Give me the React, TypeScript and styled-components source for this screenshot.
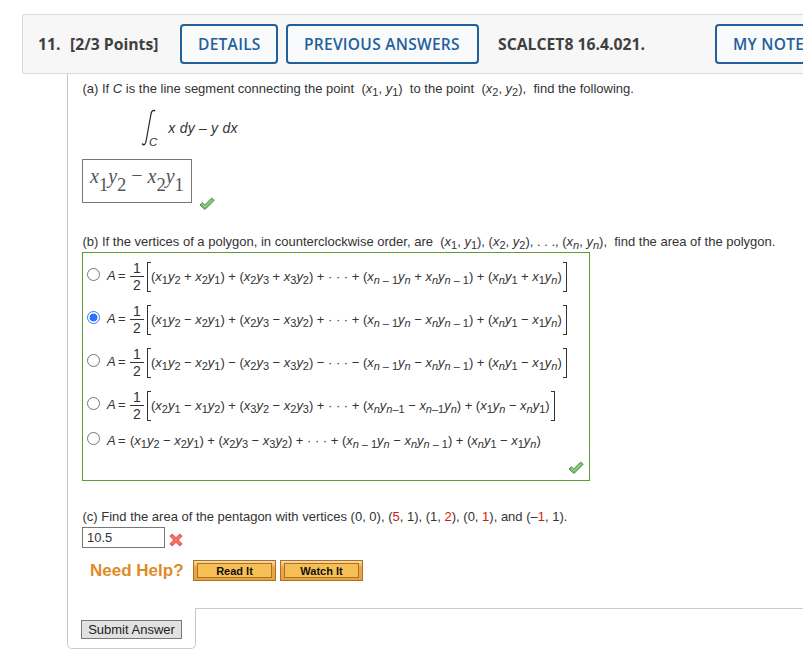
import React from "react";
import styled, { createGlobalStyle, css } from "styled-components";

const GlobalStyle = createGlobalStyle`
  * { box-sizing: border-box; }
  html, body { margin: 0; padding: 0; background: #fff; overflow: hidden; }
  body { font: 13px "Liberation Sans", Arial, sans-serif; color: #333; }
`;

const Page = styled.div`
  width: 803px;
  height: 662px;
  padding: 14px 0 0 22px;
  overflow: hidden;
`;

const Header = styled.header`
  display: flex;
  align-items: center;
  width: 900px;
  height: 60px;
  padding-left: 15px;
  background: #f7f7f7;
  border: 1px solid #d9d9d9;
  border-radius: 2px;
  font: 700 15.75px "Open Sans", sans-serif;
  color: #3f3f3f;
  white-space: nowrap;
`;

const HeaderText = styled.span<{ $w: number }>`
  flex: none;
  width: ${(p) => p.$w}px;
`;

const HeaderButton = styled.button<{ $w: number; $gap: number }>`
  flex: none;
  width: ${(p) => p.$w}px;
  height: 40px;
  margin-right: ${(p) => p.$gap}px;
  padding: 0 0 0 16px;
  background: #f9fafb;
  border: 2px solid #22609c;
  border-radius: 4px;
  color: #22609c;
  font: 600 15.5px "Open Sans", sans-serif;
  letter-spacing: 0.28px;
  text-align: left;
`;

const Body = styled.main`
  height: 534px;
  margin-left: 45px;
  padding: 7px 0 0 14px;
  border-left: 1px solid #c9c9c9;
`;

const Line = styled.div`
  height: 16px;
  padding-left: 0.5px;
  line-height: 16px;
  white-space: pre;
`;

const Sub = styled.span`
  position: relative;
  top: 3px;
  font-size: 11px;
  line-height: 0;
`;

const Red = styled.span`
  color: #d9170c;
`;

const IntegralRow = styled.div`
  display: flex;
  height: 62px;
  padding: 12px 0 0 59px;
`;

const Integrand = styled.span`
  margin: 11px 0 0 11px;
  font-size: 14px;
  font-style: italic;
  line-height: 16px;
  letter-spacing: 0.22px;
`;

const AnswerRow = styled.div`
  display: flex;
  align-items: flex-end;
  height: 51px;
  margin-bottom: 24px;
`;

const AnswerBox = styled.div`
  width: 110px;
  height: 44px;
  margin-bottom: 7px;
  padding: 6px 0 0 7px;
  border: 1px solid #777;
  color: #555;
  font: 20px/20px "Liberation Serif", serif;
  white-space: nowrap;
`;

const SerifSub = styled.span`
  position: relative;
  top: 8px;
  font-size: 18.5px;
  line-height: 0;
`;

const MarkSlot = styled.span<{ $left: number }>`
  display: block;
  height: 14px;
  margin-left: ${(p) => p.$left}px;
  transform: translateY(1px);
`;

const Choices = styled.div`
  display: flex;
  flex-direction: column;
  width: 508px;
  height: 229px;
  margin: 2px 0 28px;
  padding: 2px 5px 0 4px;
  border: 1px solid #5f9b33;
`;

const Choice = styled.label<{ $plain?: boolean }>`
  display: flex;
  align-items: flex-start;
  height: ${(p) => (p.$plain ? 31 : 43)}px;
  padding-top: ${(p) => (p.$plain ? 0 : 6)}px;
  white-space: nowrap;
`;

const Radio = styled.span<{ $on?: boolean; $plain?: boolean }>`
  flex: none;
  width: 13px;
  height: 13px;
  margin: ${(p) => (p.$plain ? 5 : 7)}px 7px 0 0;
  border: 1px solid #767676;
  border-radius: 50%;
  ${(p) =>
    p.$on &&
    css`
      border-color: #3478f6;
      background: radial-gradient(circle, #3071f7 0 3.6px, #fff 4.3px);
    `}
`;

const Lhs = styled.span<{ $plain?: boolean }>`
  flex: none;
  width: 23px;
  padding-top: ${(p) => (p.$plain ? 6 : 7)}px;
  line-height: 16px;
  word-spacing: -1.2px;
`;

const Fraction = styled.span`
  display: flex;
  flex: none;
  flex-direction: column;
  width: 14px;
  margin-right: 3px;
  text-align: center;
  font-size: 14px;
  line-height: 14px;
`;

const FractionTop = styled.span`
  height: 16px;
  border-bottom: 1px solid #333;
`;

const FractionBottom = styled.span`
  padding-top: 1px;
`;

const Bracket = styled.span<{ $side: "left" | "right" }>`
  flex: none;
  width: 4px;
  height: 30px;
  margin-top: 1px;
  border: 1px solid #333;
  border-${(p) => (p.$side === "left" ? "right" : "left")}: 0;
`;

const Formula = styled.span<{ $w: number; $plain?: boolean }>`
  flex: none;
  width: ${(p) => p.$w}px;
  padding-top: ${(p) => (p.$plain ? 6 : 8)}px;
  line-height: 16px;
  letter-spacing: -0.02px;
`;

const ChoicesMark = styled.span`
  display: flex;
  justify-content: flex-end;
  margin-top: 3px;
`;

const InputRow = styled.div`
  display: flex;
  align-items: center;
  gap: 4px;
  height: 21px;
  margin-top: 2px;
`;

const NumberInput = styled.input`
  width: 83px;
  height: 21px;
  padding: 0 4px;
  border: 1px solid #767676;
  border-radius: 0;
  outline: 0;
  color: #333;
  font: 13px "Liberation Sans", sans-serif;
`;

const CrossSlot = styled.span`
  display: block;
  height: 14px;
  transform: translateY(2px);
`;

const HelpRow = styled.div`
  display: flex;
  align-items: center;
  height: 21px;
  margin: 12px 0 0 8px;
`;

const HelpTitle = styled.strong`
  width: 103px;
  color: #df8b26;
  font-size: 17px;
  line-height: 20px;
`;

const HelpButton = styled.button`
  width: 83px;
  height: 21px;
  margin-right: 4px;
  padding: 2px 3px;
  background: linear-gradient(#fbd9ae, #f0a448 35%, #eda040);
  border: 1px solid #a97324;
`;

const HelpLabel = styled.span`
  display: block;
  height: 15px;
  background: #f5bf55;
  border: 1px solid #a97324;
  color: #111;
  font: 700 11px/14px "Liberation Sans", sans-serif;
`;

const Footer = styled.footer`
  display: flex;
  height: 41px;
  margin-left: 45px;
`;

const FooterTab = styled.div`
  width: 129px;
  height: 41px;
  padding: 12px 0 0 13px;
  border: 1px solid #c9c9c9;
  border-top: 0;
  border-radius: 0 0 5px 5px;
`;

const FooterRule = styled.div`
  flex: 1;
  height: 1px;
  background: #c9c9c9;
`;

const SubmitButton = styled.button`
  width: 101px;
  height: 19px;
  padding: 0;
  background: #e1e1e1;
  border: 1px solid #777;
  color: #222;
  font: 13px/16px "Liberation Sans", sans-serif;
  white-space: nowrap;
`;

/* Renders "x_1" and "x_{n-1}" as subscripts, with variables in italics. */
const italics = (s: string) =>
  s.split(/([A-Za-z]+)/).map((t, i) => (i % 2 ? <i key={i}>{t}</i> : t));

const Tex = ({ children }: { children: string }) => (
  <>
    {children.split(/_(\{[^}]*\}|.)/).map((t, i) =>
      i % 2 ? <Sub key={i}>{italics(t.replace(/[{}]/g, ""))}</Sub> : <span key={i}>{italics(t)}</span>
    )}
  </>
);

const Check = () => (
  <svg width="16" height="14" viewBox="0 0 16 14">
    <path d="M1 8 3.4 5.8 5.8 8 12.7 1 15.2 3.3 6 12.5Z" fill="#79bd6e" stroke="#4c9446" strokeLinejoin="round" />
    <path d="M3.3 7.4 6 9.8 12.9 2.7" fill="none" stroke="#a2d794" strokeWidth="1" />
  </svg>
);

const Cross = () => (
  <svg width="14" height="14" viewBox="0 0 14 14">
    <path
      d="M1 3.2 3.2 1 7 4.7 10.8 1 13 3.2 9.3 7 13 10.8 10.8 13 7 9.3 3.2 13 1 10.8 4.7 7Z"
      fill="#f0625e"
      stroke="#e05350"
      strokeLinejoin="round"
    />
    <path d="m3 3 8 8M11 3l-8 8" stroke="#f5827c" />
  </svg>
);

const Integral = () => (
  <svg width="16" height="39" viewBox="0 0 16 39">
    <path d="M13.6 1.4C11.6.8 10.6 2.4 10 5L5.2 31.5C4.6 34.8 3.6 36.6 1.4 35.4" fill="none" stroke="#222" strokeWidth="1.2" />
    <circle cx="13.6" cy="1.8" r="0.8" fill="#222" />
    <circle cx="1.6" cy="35.1" r="0.8" fill="#222" />
  </svg>
);

const IntegralSub = styled.i`
  align-self: flex-end;
  margin: 0 0 10px -8px;
  font-size: 11.5px;
  line-height: 14px;
`;

const Minus = styled.span`
  position: relative;
  top: -1px;
`;

const choices = [
  { w: 412, f: "(x_1y_2 + x_2y_1) + (x_2y_3 + x_3y_2) + · · · + (x_{n – 1}y_n + x_ny_{n – 1}) + (x_ny_1 + x_1y_n)" },
  { w: 412, on: true, f: "(x_1y_2 − x_2y_1) + (x_2y_3 − x_3y_2) + · · · + (x_{n – 1}y_n − x_ny_{n – 1}) + (x_ny_1 − x_1y_n)" },
  { w: 412, f: "(x_1y_2 − x_2y_1) − (x_2y_3 − x_3y_2) − · · · − (x_{n – 1}y_n − x_ny_{n – 1}) + (x_ny_1 − x_1y_n)" },
  { w: 400, f: "(x_2y_1 − x_1y_2) + (x_3y_2 − x_2y_3) + · · · + (x_ny_{n–1} − x_{n–1}y_n) + (x_1y_n − x_ny_1)" },
  { w: 412, plain: true, f: "(x_1y_2 − x_2y_1) + (x_2y_3 − x_3y_2) + · · · + (x_{n – 1}y_n − x_ny_{n – 1}) + (x_ny_1 − x_1y_n)" },
];

export default function App() {
  return (
    <Page>
      <GlobalStyle />
      <Header>
        <HeaderText $w={32}>11.</HeaderText>
        <HeaderText $w={110}>[2/3 Points]</HeaderText>
        <HeaderButton $w={98} $gap={8}>DETAILS</HeaderButton>
        <HeaderButton $w={193} $gap={19}>PREVIOUS ANSWERS</HeaderButton>
        <HeaderText $w={217}>SCALCET8 16.4.021.</HeaderText>
        <HeaderButton $w={122} $gap={0}>MY NOTES</HeaderButton>
      </Header>
      <Body>
        <Line>
          (a) If <i>C</i> is the line segment connecting the point{"  "}
          <Tex>(x_1, y_1)</Tex>
          {"  to the point  "}
          <Tex>(x_2, y_2)</Tex>,{"  find the following."}
        </Line>
        <IntegralRow>
          <Integral />
          <IntegralSub>C</IntegralSub>
          <Integrand>x dy – y dx</Integrand>
        </IntegralRow>
        <AnswerRow>
          <AnswerBox>
            <i>x</i><SerifSub>1</SerifSub><i>y</i><SerifSub>2</SerifSub> <Minus>−</Minus> <i>x</i><SerifSub>2</SerifSub><i>y</i><SerifSub>1</SerifSub>
          </AnswerBox>
          <MarkSlot $left={7}><Check /></MarkSlot>
        </AnswerRow>
        <Line>
          {"(b) If the vertices of a polygon, in counterclockwise order, are  "}
          <Tex>(x_1, y_1), (x_2, y_2), . . ., (x_n, y_n)</Tex>
          {",  find the area of the polygon."}
        </Line>
        <Choices>
          {choices.map((c, i) => (
            <Choice key={i} $plain={c.plain}>
              <Radio $on={c.on} $plain={c.plain} />
              <Lhs $plain={c.plain}><i>A</i> =</Lhs>
              {!c.plain && (
                <>
                  <Fraction>
                    <FractionTop>1</FractionTop>
                    <FractionBottom>2</FractionBottom>
                  </Fraction>
                  <Bracket $side="left" />
                </>
              )}
              <Formula $w={c.w} $plain={c.plain}><Tex>{c.f}</Tex></Formula>
              {!c.plain && <Bracket $side="right" />}
            </Choice>
          ))}
          <ChoicesMark><Check /></ChoicesMark>
        </Choices>
        <Line>
          (c) Find the area of the pentagon with vertices (0, 0), (<Red>5</Red>, 1), (1, <Red>2</Red>), (0, <Red>1</Red>), and (–<Red>1</Red>, 1).
        </Line>
        <InputRow>
          <NumberInput defaultValue="10.5" />
          <CrossSlot><Cross /></CrossSlot>
        </InputRow>
        <HelpRow>
          <HelpTitle>Need Help?</HelpTitle>
          <HelpButton><HelpLabel>Read It</HelpLabel></HelpButton>
          <HelpButton><HelpLabel>Watch It</HelpLabel></HelpButton>
        </HelpRow>
      </Body>
      <Footer>
        <FooterTab><SubmitButton>Submit Answer</SubmitButton></FooterTab>
        <FooterRule />
      </Footer>
    </Page>
  );
}
